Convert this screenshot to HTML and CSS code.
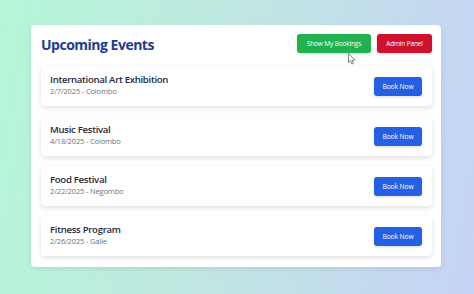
FILE: index.html
```html
<!DOCTYPE html>
<html>
<head>
<meta charset="utf-8">
<link rel="stylesheet" href="styles.css">
</head>
<body>
<div class="card">
  <div class="header">
    <h1 class="title">Upcoming Events</h1>
    <div class="actions">
      <button class="btn btn-green">Show My Bookings</button>
      <button class="btn btn-red">Admin Panel</button>
    </div>
  </div>
  <div class="list">
    <div class="row">
      <div class="info">
        <div class="name">International Art Exhibition</div>
        <div class="meta">2/7/2025 - Colombo</div>
      </div>
      <button class="btn btn-blue">Book Now</button>
    </div>
    <div class="row">
      <div class="info">
        <div class="name">Music Festival</div>
        <div class="meta">4/18/2025 - Colombo</div>
      </div>
      <button class="btn btn-blue">Book Now</button>
    </div>
    <div class="row">
      <div class="info">
        <div class="name">Food Festival</div>
        <div class="meta">2/22/2025 - Negombo</div>
      </div>
      <button class="btn btn-blue">Book Now</button>
    </div>
    <div class="row">
      <div class="info">
        <div class="name">Fitness Program</div>
        <div class="meta">2/26/2025 - Galle</div>
      </div>
      <button class="btn btn-blue">Book Now</button>
    </div>
  </div>
  <svg class="cursor" width="8" height="12" viewBox="0 0 8 12"><path d="M0.5 0.5 L0.5 9.5 L2.6 7.6 L4 11 L5.4 10.4 L4 7.2 L7 7.2 Z" fill="#fff" stroke="#666" stroke-width="0.8" stroke-linejoin="round"/></svg>
</div>
</body>
</html>
```
FILE: styles.css
```css
html, body {
  margin: 0;
  height: 294px;
  overflow: hidden;
}
body {
  font-family: "Open Sans", "Noto Sans", sans-serif;
  background: linear-gradient(100deg, #b5f6d7 0%, #c0e8e2 45%, #c6d3f6 100%);
  padding: 25px 33px 27px 31px;
  box-sizing: border-box;
}
.card {
  position: relative;
  width: 410px;
  height: 242px;
  background: #fff;
  border-radius: 4px;
  box-shadow: 0 2px 6px rgba(0,0,0,0.08);
  padding: 9px 9px 10px 10px;
  box-sizing: border-box;
}
.header {
  display: flex;
  justify-content: space-between;
  align-items: center;
  height: 19px;
  margin-bottom: 13px;
}
.title {
  margin: 0;
  font-size: 14px;
  letter-spacing: -0.5px;
  line-height: 19px;
  font-weight: 700;
  color: #1f3a93;
  padding-top: 2px;
}
.actions {
  display: flex;
  gap: 6px;
}
.btn {
  border: none;
  border-radius: 3px;
  height: 19px;
  padding: 0;
  font-family: "Open Sans", "Noto Sans", sans-serif;
  font-size: 6.5px;
  letter-spacing: -0.15px;
  color: #fff;
  box-shadow: 0 1px 3px rgba(0,0,0,0.15);
}
.btn-green { background: #21b14f; width: 74px; }
.btn-red { background: #d0112b; width: 55px; }
.btn-blue { background: #2560e4; width: 48px; margin-right: 10px; font-size: 6.7px; letter-spacing: -0.1px; }
.list {
  display: flex;
  flex-direction: column;
  gap: 10px;
}
.row {
  height: 40px;
  display: flex;
  align-items: center;
  justify-content: space-between;
  padding-left: 9px;
  border-radius: 4px;
  background: #fff;
  box-shadow: 0 2px 5px rgba(0,0,0,0.12);
}
.info {
  padding-bottom: 2px;
}
.name {
  font-size: 9.6px;
  letter-spacing: -0.3px;
  font-weight: 600;
  color: #1f2937;
  line-height: 12px;
}
.meta {
  font-size: 7.5px;
  letter-spacing: -0.15px;
  color: #6b7280;
  line-height: 10px;
}
.cursor {
  position: absolute;
  left: 317px;
  top: 28px;
}
```
